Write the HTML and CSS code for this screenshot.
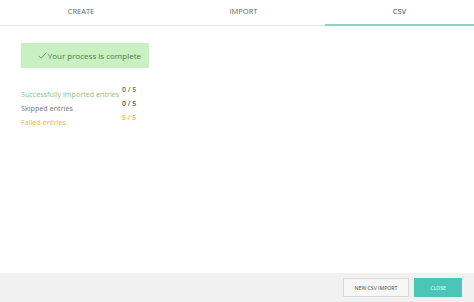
FILE: index.html
```html
<!DOCTYPE html>
<html lang="en-US">
<head>
    <title>CSV Import</title>

    <link rel="stylesheet" href="styles.css">
</head>
<body>

    <div class="modal">

        <ul class="tabs">
            <li class="tabs__item">Create</li>
            <li class="tabs__item">Import</li>
            <li class="tabs__item active">CSV</li>
        </ul>

        <div class="modal__body">
            <div class="notice">
                <svg class="notice__icon" viewBox="0 0 10 8" width="9" height="7">
                    <path d="M0.6 4.4 L3.4 7.2 L9.4 0.8" fill="none" stroke="#4e7a4e" stroke-width="0.9"/>
                </svg>
                Your process is complete
            </div>

            <div class="results">
                <div class="results__row results__row--success">
                    <span class="results__label">Successfully imported entries</span>
                    <span class="results__value">0 / 5</span>
                </div>
                <div class="results__row results__row--skipped">
                    <span class="results__label">Skipped entries</span>
                    <span class="results__value">0 / 5</span>
                </div>
                <div class="results__row results__row--failed">
                    <span class="results__label">Failed entries</span>
                    <span class="results__value">5 / 5</span>
                </div>
            </div>
        </div>

        <div class="modal__footer">
            <button class="btn">New CSV import</button>
            <button class="btn btn--primary">Close</button>
        </div>

    </div>

</body>
</html>
```

FILE: styles.css
```css
* {
    box-sizing: border-box;
}

body {
    margin: 0;
    padding: 0;
    background-color: #fff;
    font-family: "Open Sans", sans-serif;
    color: #555;
}

.modal {
    display: flex;
    flex-direction: column;
    height: 100vh;
}

.tabs {
    list-style-type: none;
    margin: 0;
    padding: 0;
    display: grid;
    grid-template-columns: 162px 163px 1fr;
    border-bottom: 1px solid #e8e8e8;
}

.tabs__item {
    text-align: center;
    text-transform: uppercase;
    font-size: 7.5px;
    line-height: 1;
    padding: 8px 0 8px;
    color: #666;
    border-bottom: 2px solid transparent;
    margin-bottom: -1px;
}

.tabs__item.active {
    color: #444;
    border-bottom-color: #8fd3c8;
}

.modal__body {
    padding: 17px 21px 0;
    flex: 1;
}

.notice {
    width: 128px;
    height: 25px;
    background-color: #c8f0c0;
    color: #4e7a4e;
    font-size: 8px;
    display: flex;
    align-items: center;
    justify-content: flex-end;
    gap: 1px;
    padding-right: 8px;
}

.notice__icon {
    display: block;
}

.results {
    margin-top: 17px;
    font-size: 7.2px;
}

.results__row {
    display: flex;
    height: 14px;
}

.results__label {
    line-height: 10px;
    padding-top: 4px;
    width: 101px;
    white-space: nowrap;
}

.results__value {
    line-height: 10px;
    font-weight: 600;
    font-size: 7px;
}

.results__row--success .results__label {
    color: #8cc08c;
}

.results__row--success .results__value {
    color: #5a7a5a;
}

.results__row--skipped .results__label {
    color: #777;
}

.results__row--skipped .results__value {
    color: #555;
}

.results__row--failed .results__label,
.results__row--failed .results__value {
    color: #f5b342;
}

.modal__footer {
    background-color: #f1f1f1;
    height: 29px;
    padding: 5px 12px 0 0;
    display: flex;
    justify-content: flex-end;
    align-items: flex-start;
    gap: 5px;
}

.btn {
    font-family: inherit;
    font-size: 5.2px;
    text-transform: uppercase;
    height: 19px;
    padding: 0;
    width: 66px;
    background-color: #f7f7f7;
    color: #444;
    border: 1px solid #d8d8d8;
    cursor: pointer;
}

.btn--primary {
    width: 48px;
    background-color: #4cc5b9;
    border-color: #4cc5b9;
    color: #fff;
}
```
